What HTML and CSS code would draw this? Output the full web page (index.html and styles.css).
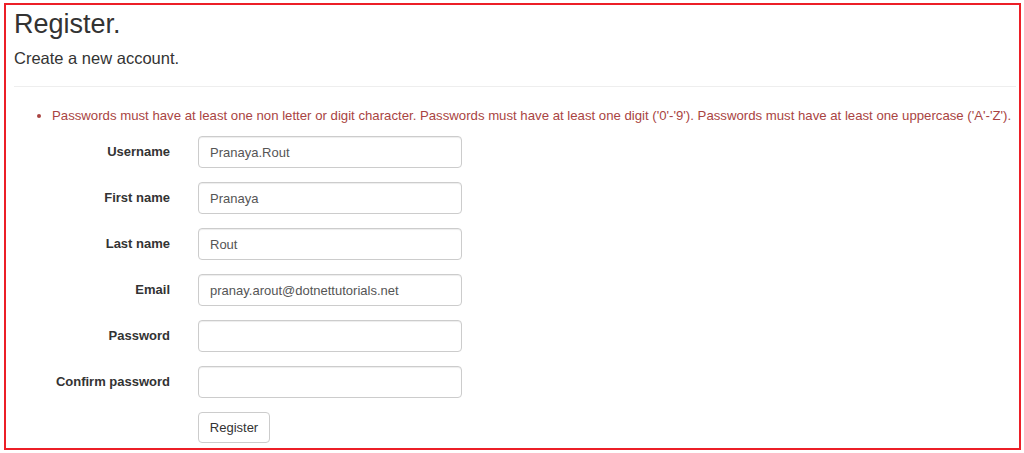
FILE: index.html
```html
<!DOCTYPE html>
<html lang="en">
<head>
<meta charset="utf-8">
<title>Register</title>
<link rel="stylesheet" href="styles.css">
</head>
<body>
<div class="frame">
  <h2 class="title">Register.</h2>
  <h4 class="subtitle">Create a new account.</h4>
  <hr class="divider">
  <ul class="errors">
    <li>Passwords must have at least one non letter or digit character. Passwords must have at least one digit ('0'-'9'). Passwords must have at least one uppercase ('A'-'Z').</li>
  </ul>
  <form class="form">
    <label class="label">Username</label>
    <input class="input" type="text" value="Pranaya.Rout">
    <label class="label">First name</label>
    <input class="input" type="text" value="Pranaya">
    <label class="label">Last name</label>
    <input class="input" type="text" value="Rout">
    <label class="label">Email</label>
    <input class="input" type="text" value="pranay.arout@dotnettutorials.net">
    <label class="label">Password</label>
    <input class="input" type="password" value="">
    <label class="label">Confirm password</label>
    <input class="input" type="password" value="">
    <span class="spacer"></span>
    <div class="actions"><button class="btn" type="button">Register</button></div>
  </form>
</div>
</body>
</html>
```

FILE: styles.css
```css
html, body {
  margin: 0;
  padding: 0;
  background: #ffffff;
}

body {
  font-family: "Liberation Sans", Arial, Helvetica, sans-serif;
  font-size: 13px;
  color: #333333;
}

.frame {
  margin: 3px 0 0 4px;
  width: 1017px;
  height: 447px;
  box-sizing: border-box;
  border: 2px solid #ec1f27;
  padding: 0 3px 0 8px;
  overflow: hidden;
}

.title {
  margin: 4px 0 0;
  font-size: 27px;
  line-height: 30px;
  font-weight: 400;
  color: #333333;
}

.subtitle {
  margin: 9px 0 0;
  font-size: 16.5px;
  line-height: 20px;
  font-weight: 400;
  color: #333333;
}

.divider {
  margin: 18px 0 0;
  border: 0;
  border-top: 1px solid #eeeeee;
  height: 0;
}

.errors {
  margin: 20px 0 0;
  padding-left: 38px;
  color: #a94442;
  font-size: 13.2px;
  line-height: 18px;
  white-space: nowrap;
}

.form {
  margin-top: 11px;
  display: grid;
  grid-template-columns: 156px 264px;
  column-gap: 28px;
  row-gap: 14px;
  align-items: center;
}

.label {
  text-align: right;
  font-weight: 700;
  color: #333333;
  line-height: 18px;
}

.input {
  box-sizing: border-box;
  width: 264px;
  height: 32px;
  margin: 0;
  padding: 0 11px;
  font-family: inherit;
  font-size: 13px;
  color: #555555;
  background: #ffffff;
  border: 1px solid #cccccc;
  border-radius: 4px;
  box-shadow: inset 0 1px 1px rgba(0, 0, 0, 0.075);
  outline: none;
}

.actions {
  display: flex;
}

.btn {
  box-sizing: border-box;
  width: 72px;
  height: 31px;
  padding: 0;
  font-family: inherit;
  font-size: 13px;
  color: #333333;
  background: #ffffff;
  border: 1px solid #cccccc;
  border-radius: 4px;
}
```
